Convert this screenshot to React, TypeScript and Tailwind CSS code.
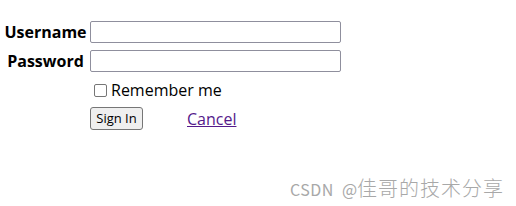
import React from "react";

export default function App() {
  return (
    <div className="relative w-[516px] h-[206px] bg-white overflow-hidden" style={{ fontFamily: '"Open Sans", "Noto Sans", sans-serif' }}>
      <div className="pt-[21px] pl-[3px] flex flex-col">
        <div className="flex items-center h-[22px]">
          <label className="w-[85px] text-center font-bold text-[16px] text-black leading-none">Username</label>
          <input className="ml-[2px] w-[251px] h-[22px] border border-[#8f8f9d] rounded-[2px] bg-white outline-none" />
        </div>
        <div className="flex items-center h-[22px] mt-[7px]">
          <label className="w-[85px] text-center font-bold text-[16px] text-black leading-none">Password</label>
          <input type="password" className="ml-[2px] w-[251px] h-[22px] border border-[#8f8f9d] rounded-[2px] bg-white outline-none" />
        </div>
        <div className="flex items-center h-[20px] mt-[8px] pl-[87px]">
          <span className="ml-[4px] w-[13px] h-[13px] border border-[#767676] rounded-[2px] bg-white" />
          <span className="ml-[4px] text-[16px] text-black leading-none">Remember me</span>
        </div>
        <div className="flex items-center mt-[7px] pl-[87px]">
          <button className="w-[53px] h-[23px] border border-[#767676] rounded-[3px] bg-[#efefef] text-[13px] text-black leading-none">Sign In</button>
          <a href="#" className="ml-[44px] text-[16px] text-[#551a8b] underline leading-none">Cancel</a>
        </div>
      </div>
      <div className="absolute left-[290px] top-[173px] flex items-baseline whitespace-nowrap text-[#a8a8a8]" style={{ fontFamily: '"Noto Sans CJK SC", sans-serif' }}>
        <span className="text-[16px] tracking-[0.5px]">CSDN</span>
        <span className="text-[16px] ml-[8px]">@</span>
        <span className="text-[20px] tracking-[1px] font-light">佳哥的技术分享</span>
      </div>
    </div>
  );
}
